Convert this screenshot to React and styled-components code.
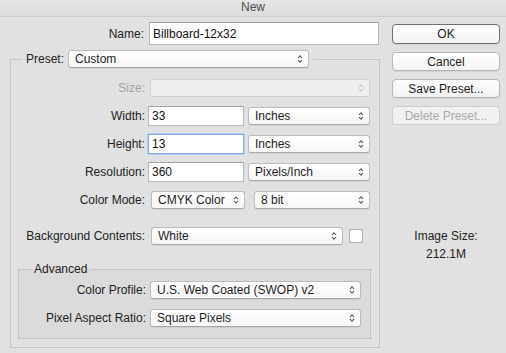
import React from "react";
import styled, { createGlobalStyle } from "styled-components";

const FONT = `"Liberation Sans", Arial, Helvetica, sans-serif`;

const GlobalStyle = createGlobalStyle`
  html, body { margin: 0; padding: 0; background: #e1e1e1; }
  body { font-family: ${FONT}; }
  * { -webkit-font-smoothing: antialiased; }
`;

const Window = styled.div`
  width: 506px;
  height: 353px;
  background: #e1e1e1;
  overflow: hidden;
  font-family: ${FONT};
`;

const TitleBar = styled.div`
  height: 16px;
  line-height: 15px;
  text-align: center;
  font-size: 12px;
  color: #4a4a4a;
  background: linear-gradient(#e6e6e6, #dcdcdc);
  border-bottom: 1px solid #cbcbcb;
`;

const Body = styled.div`
  display: flex;
  align-items: flex-start;
  gap: 12px;
  padding: 0 6px 0 10px;
`;

const Main = styled.div`
  width: 370px;
  display: flex;
  flex-direction: column;
`;

const Side = styled.div`
  width: 108px;
  display: flex;
  flex-direction: column;
  gap: 8px;
  padding-top: 7px;
`;

const Row = styled.div`
  display: grid;
  grid-template-columns: ${(p) => p.$labelWidth}px 1fr;
  column-gap: ${(p) => p.$gap ?? 3}px;
  align-items: center;
  height: ${(p) => p.$h ?? 28}px;
  margin-top: ${(p) => p.$mt ?? 0}px;
`;

const Label = styled.span`
  text-align: right;
  font-size: 12px;
  color: ${(p) => (p.$disabled ? "#a3a3a3" : "#222")};
  white-space: nowrap;
`;

const Controls = styled.div`
  display: flex;
  align-items: center;
  gap: ${(p) => p.$gap ?? 4}px;
`;

const TextField = styled.input`
  box-sizing: border-box;
  width: ${(p) => p.$w}px;
  height: ${(p) => p.$h ?? 20}px;
  margin: 0;
  padding: 0 3px;
  background: #fff;
  border: 1px solid ${(p) => (p.$focused ? "#7fa9e2" : "#b8b8b8")};
  border-top-color: ${(p) => (p.$focused ? "#7fa9e2" : "#a2a2a2")};
  box-shadow: ${(p) => (p.$focused ? "0 0 0 1px #b9d1f1" : "none")};
  border-radius: 0;
  font: 12px ${FONT};
  color: #111;
  outline: none;
`;

const PopupBox = styled.div`
  box-sizing: border-box;
  width: ${(p) => p.$w}px;
  height: 18px;
  margin-left: ${(p) => p.$ml ?? 0}px;
  display: flex;
  align-items: center;
  justify-content: space-between;
  padding: 0 5px 0 6px;
  background: ${(p) =>
    p.$disabled ? "#efefef" : "linear-gradient(#ffffff, #f7f7f7)"};
  border: 1px solid ${(p) => (p.$disabled ? "#d2d2d2" : "#bcbcbc")};
  border-bottom-color: ${(p) => (p.$disabled ? "#cacaca" : "#a7a7a7")};
  border-radius: 3px;
  box-shadow: ${(p) => (p.$disabled ? "none" : "0 1px 0 rgba(0,0,0,0.05)")};
  font-size: 12px;
  color: #1e1e1e;
  white-space: nowrap;
`;

const Arrows = ({ color }) => (
  <svg width="6" height="10" viewBox="0 0 6 10">
    <path d="M1 4 L3 1.8 L5 4" fill="none" stroke={color} strokeWidth="1.1" />
    <path d="M1 6 L3 8.2 L5 6" fill="none" stroke={color} strokeWidth="1.1" />
  </svg>
);

const Popup = ({ w, ml, disabled, children }) => (
  <PopupBox $w={w} $ml={ml} $disabled={disabled}>
    <span>{children}</span>
    <Arrows color={disabled ? "#c4c4c4" : "#555"} />
  </PopupBox>
);

const Swatch = styled.div`
  box-sizing: border-box;
  width: 14px;
  height: 14px;
  margin-left: 2px;
  background: #fff;
  border: 1px solid #b0b0b0;
`;

const Group = styled.fieldset`
  box-sizing: border-box;
  min-width: 0;
  margin: ${(p) => p.$margin};
  padding: ${(p) => p.$padding};
  border: 1px solid #c4c4c4;
  background: ${(p) => p.$fill ?? "transparent"};
`;

const Legend = styled.legend`
  display: flex;
  align-items: center;
  gap: 4px;
  margin-left: ${(p) => p.$ml}px;
  padding: 0 ${(p) => p.$pad}px;
  font-size: 12px;
  line-height: 14px;
  color: #222;
`;

const Button = styled.button`
  box-sizing: border-box;
  width: 108px;
  height: ${(p) => (p.$default ? 20 : 19)}px;
  margin: 0;
  padding: 0;
  font: 12px ${FONT};
  color: ${(p) => (p.$disabled ? "#a8a8a8" : "#1e1e1e")};
  background: ${(p) =>
    p.$disabled ? "#f1f1f1" : "linear-gradient(#ffffff, #f3f3f3)"};
  border: 1px solid
    ${(p) => (p.$default ? "#6f6f6f" : p.$disabled ? "#cdcdcd" : "#b6b6b6")};
  border-radius: 4px;
  box-shadow: ${(p) => (p.$disabled ? "none" : "0 1px 0 rgba(0,0,0,0.05)")};
`;

const ImageSize = styled.div`
  margin-top: 96px;
  display: flex;
  flex-direction: column;
  align-items: center;
  gap: 4px;
  font-size: 12px;
  line-height: 14px;
  color: #222;
`;

export default function App() {
  return (
    <>
      <GlobalStyle />
      <Window>
        <TitleBar>New</TitleBar>
        <Body>
          <Main>
            <Row $labelWidth={134} $gap={5} $h={23} $mt={5}>
              <Label>Name:</Label>
              <TextField readOnly value="Billboard-12x32" $w={230} $h={23} />
            </Row>

            <Group $margin="5px 0 0 0" $padding="6px 0 8px 0">
              <Legend $ml={11} $pad={4}>
                <span>Preset:</span>
                <Popup w={241}>Custom</Popup>
              </Legend>

              <Row $labelWidth={134}>
                <Label $disabled>Size:</Label>
                <Controls>
                  <Popup w={220} ml={2} disabled />
                </Controls>
              </Row>
              <Row $labelWidth={134}>
                <Label>Width:</Label>
                <Controls>
                  <TextField readOnly value="33" $w={96} />
                  <Popup w={122}>Inches</Popup>
                </Controls>
              </Row>
              <Row $labelWidth={134}>
                <Label>Height:</Label>
                <Controls>
                  <TextField readOnly value="13" $w={96} $focused />
                  <Popup w={122}>Inches</Popup>
                </Controls>
              </Row>
              <Row $labelWidth={134}>
                <Label>Resolution:</Label>
                <Controls>
                  <TextField readOnly value="360" $w={96} />
                  <Popup w={122}>Pixels/Inch</Popup>
                </Controls>
              </Row>
              <Row $labelWidth={134}>
                <Label>Color Mode:</Label>
                <Controls $gap={9}>
                  <Popup w={94} ml={3}>CMYK Color</Popup>
                  <Popup w={116}>8 bit</Popup>
                </Controls>
              </Row>
              <Row $labelWidth={134} $mt={8}>
                <Label>Background Contents:</Label>
                <Controls>
                  <Popup w={192} ml={3}>White</Popup>
                  <Swatch />
                </Controls>
              </Row>

              <Group
                $margin="12px 8px 0 7px"
                $padding="0 0 6px 0"
                $fill="#dbdbdb"
              >
                <Legend $ml={12} $pad={3}>
                  Advanced
                </Legend>
                <Row $labelWidth={127}>
                  <Label>Color Profile:</Label>
                  <Controls>
                    <Popup w={211} ml={1}>U.S. Web Coated (SWOP) v2</Popup>
                  </Controls>
                </Row>
                <Row $labelWidth={127}>
                  <Label>Pixel Aspect Ratio:</Label>
                  <Controls>
                    <Popup w={211} ml={1}>Square Pixels</Popup>
                  </Controls>
                </Row>
              </Group>
            </Group>
          </Main>

          <Side>
            <Button $default>OK</Button>
            <Button>Cancel</Button>
            <Button>Save Preset...</Button>
            <Button $disabled>Delete Preset...</Button>
            <ImageSize>
              <span>Image Size:</span>
              <span>212.1M</span>
            </ImageSize>
          </Side>
        </Body>
      </Window>
    </>
  );
}
